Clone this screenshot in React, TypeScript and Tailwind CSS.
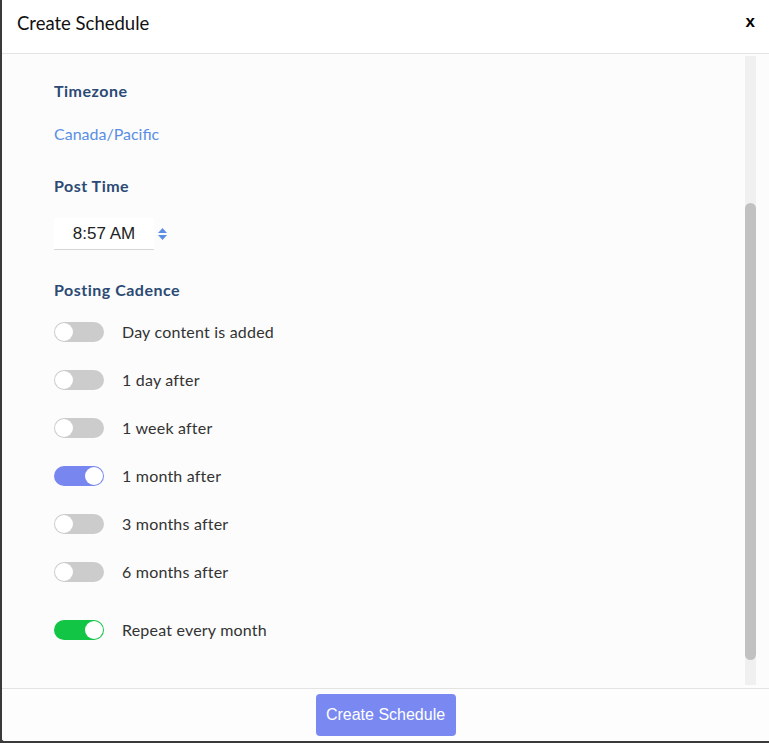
import { useState } from 'react';

const options = [
  { id: 'day', label: 'Day content is added', on: false },
  { id: '1d', label: '1 day after', on: false },
  { id: '1w', label: '1 week after', on: false },
  { id: '1m', label: '1 month after', on: true },
  { id: '3m', label: '3 months after', on: false },
  { id: '6m', label: '6 months after', on: false },
];

function Toggle({ on, color, onClick }: { on: boolean; color: string; onClick: () => void }) {
  return (
    <button
      onClick={onClick}
      className={`relative h-[20px] w-[50px] flex-shrink-0 rounded-full transition-colors ${
        on ? color : 'bg-[#cccccc]'
      }`}
    >
      <span
        className={`absolute top-[1px] h-[18px] w-[18px] rounded-full bg-white transition-all ${
          on ? 'left-[31px]' : 'left-[1px]'
        }`}
      />
    </button>
  );
}

export default function App() {
  const [cadence, setCadence] = useState(options);
  const [repeat, setRepeat] = useState(true);

  return (
    <div className="h-[743px] w-[769px] overflow-hidden bg-[#3a3a3a]">
      <div
        className="ml-[2px] flex h-[741px] flex-col overflow-hidden rounded-bl-[3px] bg-white"
        style={{ fontFamily: 'Lato, "Noto Sans", sans-serif' }}
      >
        {/* Header */}
        <div className="flex h-[54px] flex-shrink-0 items-center justify-between border-b border-[#e3e3e3] pl-[15px] pr-[14px] pb-[5px]">
          <span className="text-[18.5px] text-[#111]">Create Schedule</span>
          <button
            className="mb-[6px] text-[17px] font-bold leading-none text-black"
            style={{ fontFamily: '"Liberation Sans", Arial, sans-serif' }}
          >
            x
          </button>
        </div>

        {/* Body */}
        <div className="flex min-h-0 flex-1 bg-[#fcfcfc]">
          <div className="flex-1 pl-[52px] pt-[27px]">
            <div className="text-[16px] font-bold leading-[20px] tracking-[0.5px] text-[#2b4a74]">Timezone</div>
            <div className="mt-[23px] text-[16px] leading-[20px] text-[#5a8fe3]">Canada/Pacific</div>

            <div className="mt-[32px] text-[16px] font-bold leading-[20px] tracking-[0.5px] text-[#2b4a74]">Post Time</div>
            <div className="mt-[22px] flex items-center">
              <div
                className="flex h-[32px] w-[100px] items-center justify-center border-b border-[#d6d6d6] bg-white pt-[1px] text-[17px] text-[#222]"
                style={{ fontFamily: '"Liberation Sans", Arial, sans-serif' }}
              >
                8:57 AM
              </div>
              <svg width="9" height="12" viewBox="0 0 9 12" className="ml-[4px] mt-[-1px]">
                <path d="M4.5 0 L9 5 L0 5 Z" fill="#5a8fe3" />
                <path d="M0 7 L9 7 L4.5 12 Z" fill="#5a8fe3" />
              </svg>
            </div>

            <div className="mt-[30px] text-[16px] font-bold leading-[20px] tracking-[0.5px] text-[#2b4a74]">Posting Cadence</div>

            <div className="mt-[22px] flex flex-col gap-[28px]">
              {cadence.map((o, i) => (
                <div key={o.id} className="flex h-[20px] items-center gap-[18px]">
                  <Toggle
                    on={o.on}
                    color="bg-[#7886f0]"
                    onClick={() =>
                      setCadence(cadence.map((c, j) => (j === i ? { ...c, on: !c.on } : c)))
                    }
                  />
                  <span className="text-[16px] tracking-[0.2px] text-[#333]">{o.label}</span>
                </div>
              ))}
            </div>

            <div className="mt-[38px] flex h-[20px] items-center gap-[18px]">
              <Toggle on={repeat} color="bg-[#12c545]" onClick={() => setRepeat(!repeat)} />
              <span className="text-[16px] tracking-[0.2px] text-[#333]">Repeat every month</span>
            </div>
          </div>

          {/* Scrollbar */}
          <div className="mr-[13px] mt-[2px] mb-[3px] w-[11px] bg-[#f0f0f0]">
            <div className="mt-[147px] h-[457px] rounded-full bg-[#c1c1c1]" />
          </div>
        </div>

        {/* Footer */}
        <div className="flex h-[53px] flex-shrink-0 items-center justify-center border-t border-[#e3e3e3] bg-[#fdfdfd]">
          <button
            className="h-[42px] w-[140px] rounded-[4px] bg-[#7a89f2] text-[16px] text-white"
            style={{ fontFamily: '"Liberation Sans", Arial, sans-serif' }}
          >
            Create Schedule
          </button>
        </div>
      </div>
    </div>
  );
}
